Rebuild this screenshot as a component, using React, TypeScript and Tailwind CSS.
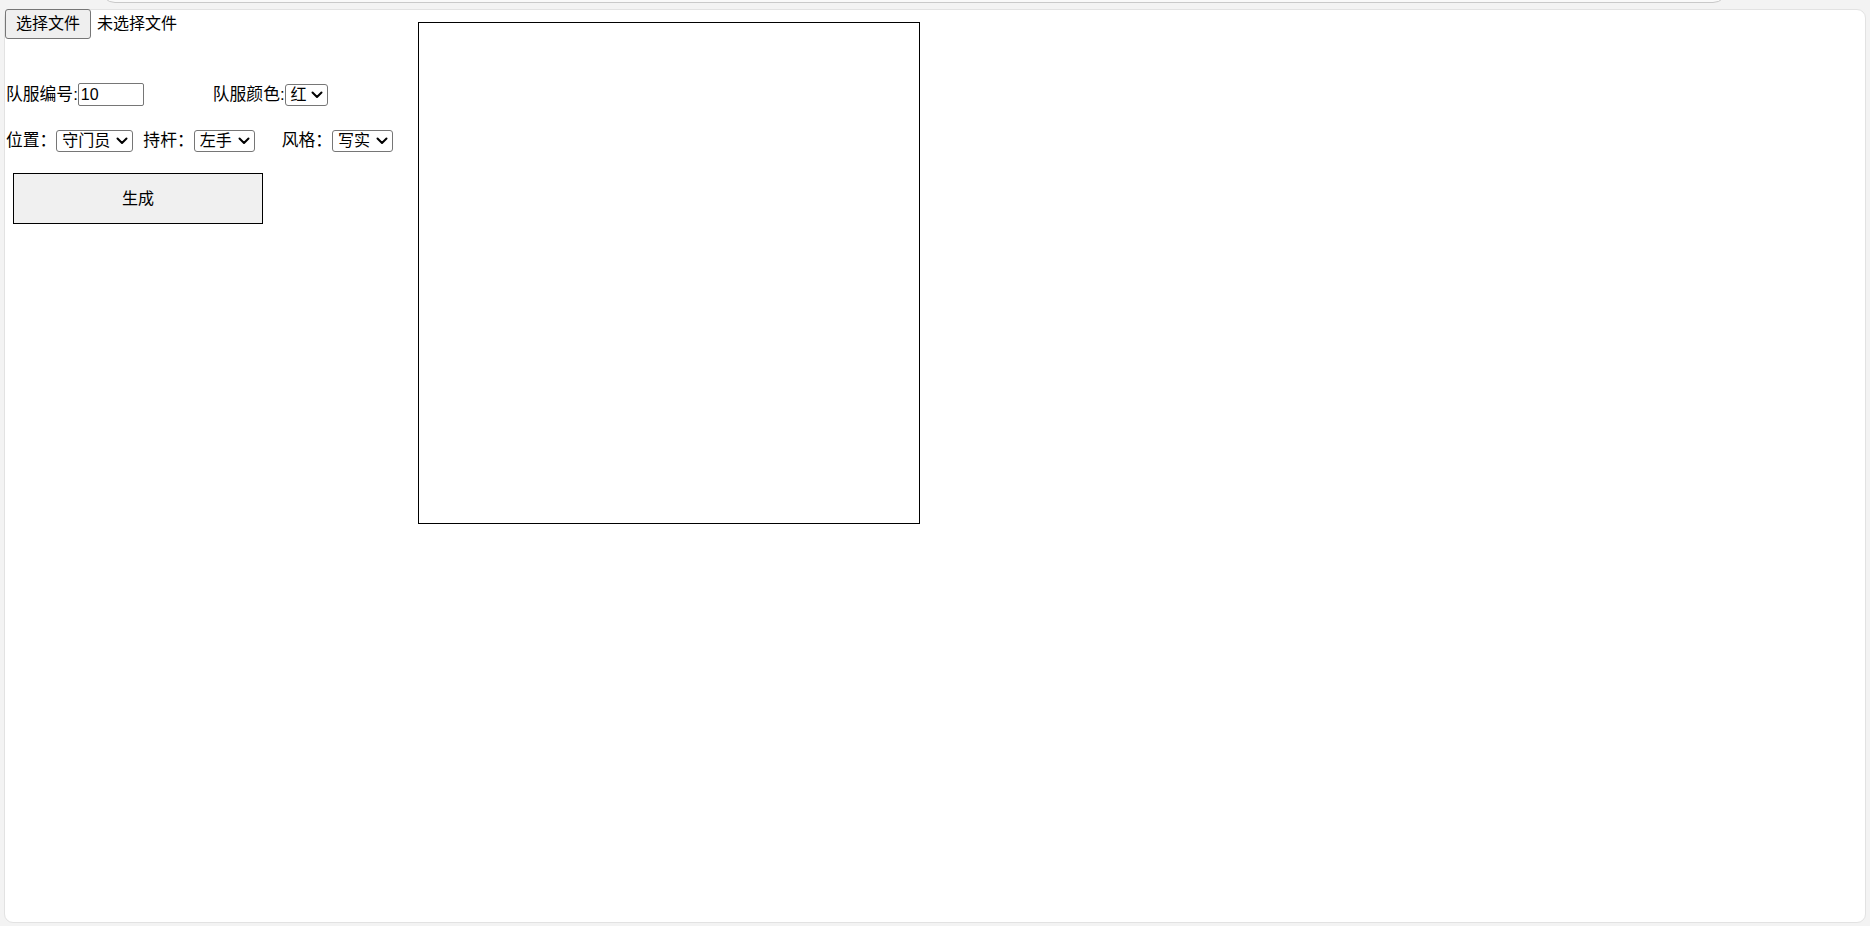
import React from "react";

function Chevron() {
  return (
    <svg width="12" height="8" viewBox="0 0 12 8" className="shrink-0">
      <path d="M1.5 1.5 L6 6 L10.5 1.5" fill="none" stroke="#000" strokeWidth="2" strokeLinecap="round" strokeLinejoin="round" />
    </svg>
  );
}

function FakeSelect({ value, w }: { value: string; w: string }) {
  return (
    <div
      className={`flex h-[22px] items-center justify-between rounded-[3px] border border-[#767676] bg-white pl-[5px] pr-[4px] text-[16px] leading-none ${w}`}
    >
      <span>{value}</span>
      <Chevron />
    </div>
  );
}

export default function App() {
  return (
    <div className="flex h-screen w-full flex-col bg-[#f3f3f3] font-['Liberation_Sans','Noto_Sans_CJK_SC',sans-serif] text-black">
      {/* browser chrome remnant */}
      <div className="h-[9px] shrink-0 overflow-hidden pl-[100px] pr-[142px]">
        <div className="-mt-[27px] h-[30px] rounded-full border border-[#c9c9c9] bg-[#f9f9f9]" />
      </div>

      <div className="mx-[4px] mb-[3px] flex flex-1 items-start rounded-[9px] border border-[#e2e2e2] bg-white">
        <div className="-mt-px w-[413px] shrink-0">
          <div className="flex h-[30px] items-center">
            <button className="h-[30px] w-[86px] rounded-[3px] border border-[#767676] bg-[#efefef] text-[16px]">
              选择文件
            </button>
            <span className="ml-[6px] text-[16px]">未选择文件</span>
          </div>

          <div className="mt-[44px] flex h-[23px] items-center pl-[1px] text-[16.8px]">
            <span>队服编号:</span>
            <div className="flex h-[23px] w-[66px] items-center rounded-[2px] border border-[#767676] pl-[2px] text-[16px]">
              10
            </div>
            <span className="ml-[69px]">队服颜色:</span>
            <FakeSelect value="红" w="w-[43px]" />
          </div>

          <div className="mt-[24px] flex h-[22px] items-center pl-[1px] text-[16.8px]">
            <span>位置：</span>
            <FakeSelect value="守门员" w="w-[77px]" />
            <span className="ml-[10px]">持杆：</span>
            <FakeSelect value="左手" w="w-[61px]" />
            <span className="ml-[27px]">风格：</span>
            <FakeSelect value="写实" w="w-[61px]" />
          </div>

          <button className="ml-[8px] mt-[21px] h-[51px] w-[250px] border-[1.5px] border-black bg-[#f0f0f0] text-[16px]">
            生成
          </button>
        </div>

        <div className="mt-[12px] h-[502px] w-[502px] shrink-0 border border-black bg-white" />
      </div>
    </div>
  );
}
